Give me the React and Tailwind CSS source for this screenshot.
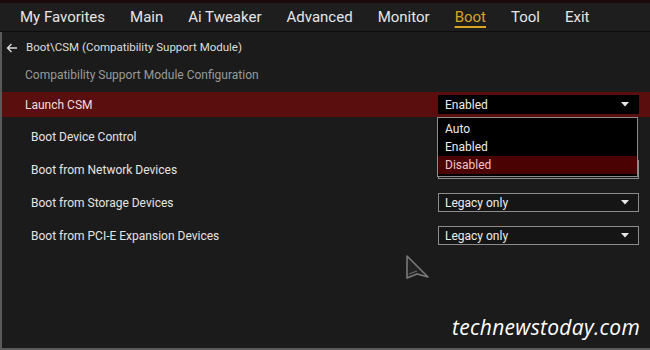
import React from 'react';

const tabs = ['My Favorites', 'Main', 'Ai Tweaker', 'Advanced', 'Monitor', 'Boot', 'Tool', 'Exit'];

const Caret = () => (
  <svg width="8" height="5" viewBox="0 0 8 5" className="shrink-0">
    <path d="M0 0 L8 0 L4 4.5 Z" fill="#e8e8e8" />
  </svg>
);

const Select = ({ value, active }) => (
  <div
    className={`w-[201px] h-[19px] flex items-center justify-between pl-[6px] pr-[9px] text-[12px] text-[#ececec] ${
      active ? 'bg-black border border-black' : 'bg-[#151515] border border-[#8c8c8c]'
    }`}
  >
    <span>{value}</span>
    <Caret />
  </div>
);

const rows = [
  { label: 'Boot Device Control' },
  { label: 'Boot from Network Devices', value: 'Legacy only' },
  { label: 'Boot from Storage Devices', value: 'Legacy only' },
  { label: 'Boot from PCI-E Expansion Devices', value: 'Legacy only' },
];

export default function App() {
  return (
    <div
      className="relative w-[650px] h-[350px] overflow-hidden bg-[#1b1b1b] flex flex-col"
      style={{ fontFamily: 'Roboto, "Open Sans", sans-serif' }}
    >
      {/* top strip */}
      <div className="h-[3px] bg-[#1d0909] shrink-0" />

      {/* tab bar */}
      <nav className="h-[29px] shrink-0 flex items-center gap-[25px] pl-[20px] bg-[#1e1e1e] border-b border-[#0c0c0c]">
        {tabs.map((t) => (
          <span
            key={t}
            className={`text-[15px] leading-none ${
              t === 'Boot' ? 'text-[#d9a624] underline underline-offset-[4px] decoration-[2px]' : 'text-[#e6e6e6]'
            }`}
          >
            {t}
          </span>
        ))}
      </nav>

      <div className="flex-1 flex flex-col border-l-2 border-b-2 border-[#5a5a5a]">
        {/* breadcrumb */}
        <div className="flex items-center h-[18px] mt-[7px] pl-[4px] gap-[8px]">
          <svg width="12" height="10" viewBox="0 0 12 10">
            <path d="M11 5 H1.5 M5.5 1 L1.5 5 L5.5 9" stroke="#dcdcdc" strokeWidth="1.4" fill="none" />
          </svg>
          <span className="text-[11.5px] text-[#dedede]">Boot\CSM (Compatibility Support Module)</span>
        </div>

        <div className="h-[18px] mt-[9px] pl-[23px] flex items-center text-[12px] text-[#9a9a9a]">
          Compatibility Support Module Configuration
        </div>

        {/* Launch CSM */}
        <div className="mt-[8px] h-[25px] flex items-center justify-between pl-[23px] pr-[11px] bg-[#5a0e0e]">
          <span className="text-[12px] text-[#f2dede]">Launch CSM</span>
          <Select value="Enabled" active />
        </div>

        <div className="mt-[3px] flex flex-col">
          {rows.map((r) => (
            <div key={r.label} className="h-[33px] flex items-center justify-between pl-[29px] pr-[11px]">
              <span className="text-[12px] text-[#e4e4e4]">{r.label}</span>
              {r.value && <Select value={r.value} />}
            </div>
          ))}
        </div>
      </div>

      {/* open dropdown list */}
      <div className="absolute left-[437px] top-[117px] w-[201px] h-[60px] bg-black border border-[#8c8c8c] flex flex-col pt-[2px] text-[12px]">
        <div className="h-[18px] flex items-center pl-[7px] text-[#ececec]">Auto</div>
        <div className="h-[18px] flex items-center pl-[7px] text-[#ececec]">Enabled</div>
        <div className="h-[18px] flex items-center pl-[7px] text-[#f0c8c8] bg-[#4a0202]">Disabled</div>
      </div>

      {/* mouse cursor */}
      <svg className="absolute left-[405px] top-[254px]" width="25" height="26" viewBox="0 0 25 26">
        <path d="M2 2 L23 23 L12 20 L2 24 Z" fill="#222" stroke="#7a7a7a" strokeWidth="1.6" strokeLinejoin="round" />
        <path d="M4 20 L12 17" fill="none" stroke="#6a6a6a" strokeWidth="1.2" />
      </svg>

      {/* watermark */}
      <div
        className="absolute left-[452px] top-[312px] text-[21px] italic text-white tracking-[0.3px]"
        style={{ fontFamily: '"Open Sans", sans-serif' }}
      >
        technewstoday.com
      </div>
    </div>
  );
}
